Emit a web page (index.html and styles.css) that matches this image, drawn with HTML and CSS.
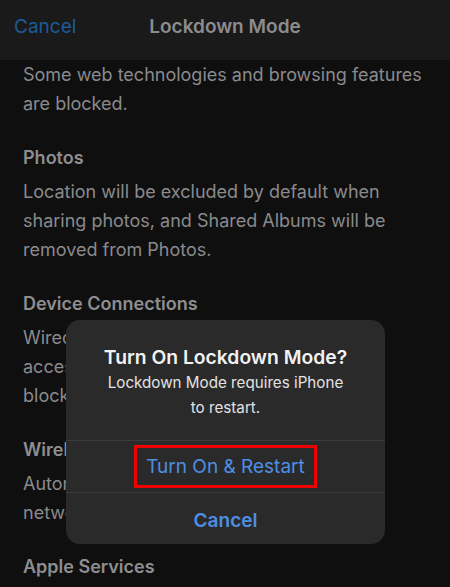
FILE: index.html
```html
<!DOCTYPE html>
<html>
<head>
<meta charset="utf-8">
<link rel="stylesheet" href="styles.css">
</head>
<body>
<div class="screen">
  <header class="nav">
    <span class="nav-cancel">Cancel</span>
    <span class="nav-title">Lockdown Mode</span>
    <span></span>
  </header>
  <main class="content">
    <p class="para">Some web technologies and browsing features are blocked.</p>
    <h2 class="heading">Photos</h2>
    <p class="para">Location will be excluded by default when sharing photos, and Shared Albums will be removed from Photos.</p>
    <h2 class="heading">Device Connections</h2>
    <p class="para">Wired connections with a computer or<br>accessory while iPhone is locked are<br>blocked.</p>
    <h2 class="heading">Wireless Connectivity</h2>
    <p class="para">Automatically joining non-secure Wi-Fi<br>networks is disabled.</p>
    <h2 class="heading">Apple Services</h2>
  </main>
  <div class="alert">
    <div class="alert-body">
      <div class="alert-title">Turn On Lockdown Mode?</div>
      <div class="alert-msg">Lockdown Mode requires iPhone<br>to restart.</div>
    </div>
    <div class="alert-btn"><span class="highlight">Turn On &amp; Restart</span></div>
    <div class="alert-btn alert-btn-bold">Cancel</div>
  </div>
</div>
</body>
</html>
```

FILE: styles.css
```css
* { box-sizing: border-box; }
html, body {
  margin: 0;
  padding: 0;
  background: #0f0f10;
}
body {
  width: 450px;
  height: 587px;
  overflow: hidden;
  font-family: Inter, "Noto Sans", sans-serif;
}
.screen {
  position: relative;
  width: 450px;
  height: 587px;
  overflow: hidden;
}
.nav {
  height: 60px;
  background: #1a1a1b;
  display: grid;
  grid-template-columns: 1fr auto 1fr;
  align-items: center;
  padding: 0 14px 8px;
}
.nav-cancel {
  color: #1d5a98;
  font-size: 19px;
}
.nav-title {
  color: #8c8c8e;
  font-size: 19px;
  font-weight: 600;
}
.content {
  padding: 0 23px;
}
.para {
  margin: 0 0 25px;
  color: #8a8a8c;
  font-size: 18px;
  line-height: 29px;
}
.heading {
  margin: 0 0 5px;
  color: #8e8e90;
  font-size: 18px;
  font-weight: 600;
  line-height: 29px;
}
.alert {
  position: absolute;
  left: 66px;
  top: 320px;
  width: 319px;
  height: 224px;
  background: #2a2a2b;
  border-radius: 14px;
  display: flex;
  flex-direction: column;
  text-align: center;
}
.alert-body {
  height: 121px;
  padding-top: 25px;
  border-bottom: 1px solid #3d3d3f;
}
.alert-title {
  color: #f2f2f2;
  font-size: 19.3px;
  font-weight: 600;
  line-height: 25px;
}
.alert-msg {
  color: #e2e2e2;
  font-size: 15.2px;
  line-height: 25px;
}
.alert-btn {
  height: 52px;
  display: flex;
  align-items: center;
  justify-content: center;
  color: #4d8fe3;
  font-size: 19px;
}
.alert-btn + .alert-btn {
  border-top: 1px solid #3d3d3f;
}
.alert-btn-bold {
  font-weight: 600;
  padding-top: 3px;
}
.highlight {
  display: inline-block;
  border: 3px solid #f00000;
  padding: 5px 9px;
  line-height: 27px;
}
```
